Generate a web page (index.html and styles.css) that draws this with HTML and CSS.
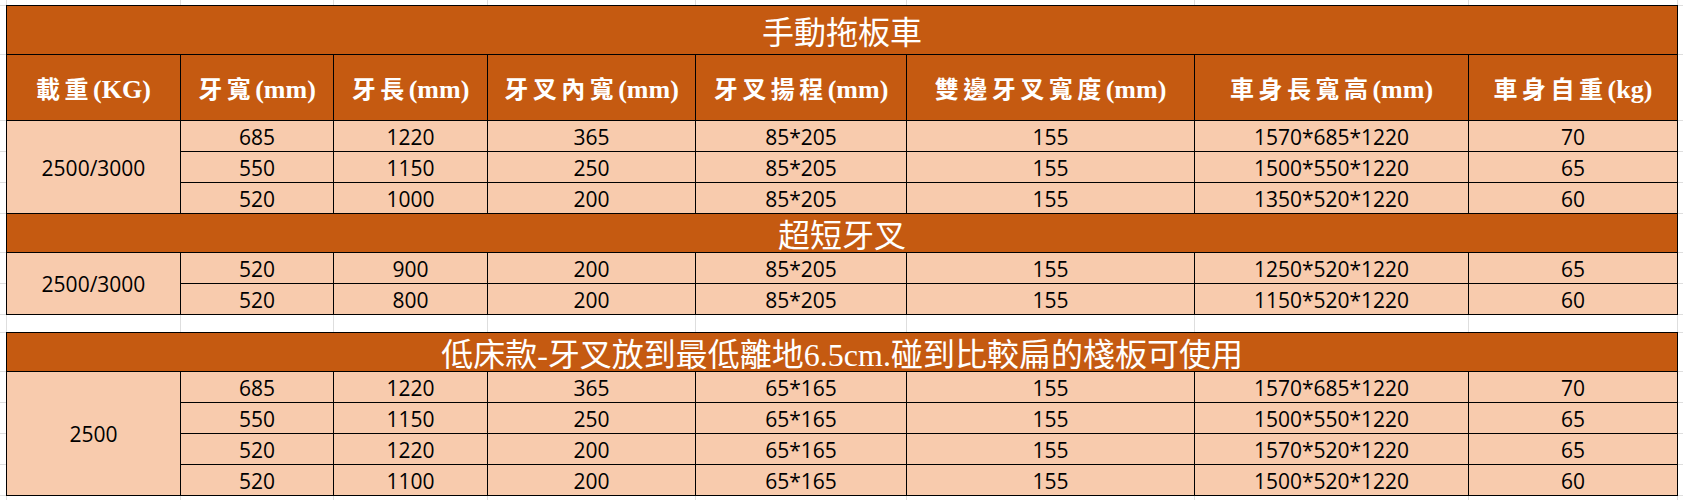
FILE: index.html
```html
<!DOCTYPE html>
<html lang="zh-Hant">
<head>
<meta charset="utf-8">
<title>手動拖板車</title>
<link rel="stylesheet" href="styles.css">
</head>
<body>
<div class="sheet">
<table class="spec">
  <colgroup>
    <col class="c1"><col class="c2"><col class="c3"><col class="c4"><col class="c5"><col class="c6"><col class="c7"><col class="c8">
  </colgroup>
  <tr class="title-row"><td colspan="8" class="title">手動拖板車</td></tr>
  <tr class="head-row">
    <td class="head">載重<span class="unit">(KG)</span></td>
    <td class="head">牙寬<span class="unit">(mm)</span></td>
    <td class="head">牙長<span class="unit">(mm)</span></td>
    <td class="head">牙叉內寬<span class="unit">(mm)</span></td>
    <td class="head">牙叉揚程<span class="unit">(mm)</span></td>
    <td class="head">雙邊牙叉寬度<span class="unit">(mm)</span></td>
    <td class="head">車身長寬高<span class="unit">(mm)</span></td>
    <td class="head">車身自重<span class="unit">(kg)</span></td>
  </tr>
  <tr class="row"><td rowspan="3">2500/3000</td><td>685</td><td>1220</td><td>365</td><td>85*205</td><td>155</td><td>1570*685*1220</td><td>70</td></tr>
  <tr class="row"><td>550</td><td>1150</td><td>250</td><td>85*205</td><td>155</td><td>1500*550*1220</td><td>65</td></tr>
  <tr class="row"><td>520</td><td>1000</td><td>200</td><td>85*205</td><td>155</td><td>1350*520*1220</td><td>60</td></tr>
  <tr class="section-row"><td colspan="8" class="title">超短牙叉</td></tr>
  <tr class="row"><td rowspan="2">2500/3000</td><td>520</td><td>900</td><td>200</td><td>85*205</td><td>155</td><td>1250*520*1220</td><td>65</td></tr>
  <tr class="row"><td>520</td><td>800</td><td>200</td><td>85*205</td><td>155</td><td>1150*520*1220</td><td>60</td></tr>
</table>

<table class="spec second">
  <colgroup>
    <col class="c1"><col class="c2"><col class="c3"><col class="c4"><col class="c5"><col class="c6"><col class="c7"><col class="c8">
  </colgroup>
  <tr class="section-row"><td colspan="8" class="title">低床款-牙叉放到最低離地6.5cm.碰到比較扁的棧板可使用</td></tr>
  <tr class="row"><td rowspan="4">2500</td><td>685</td><td>1220</td><td>365</td><td>65*165</td><td>155</td><td>1570*685*1220</td><td>70</td></tr>
  <tr class="row"><td>550</td><td>1150</td><td>250</td><td>65*165</td><td>155</td><td>1500*550*1220</td><td>65</td></tr>
  <tr class="row"><td>520</td><td>1220</td><td>200</td><td>65*165</td><td>155</td><td>1570*520*1220</td><td>65</td></tr>
  <tr class="row"><td>520</td><td>1100</td><td>200</td><td>65*165</td><td>155</td><td>1500*520*1220</td><td>60</td></tr>
</table>
</div>
</body>
</html>
```

FILE: styles.css
```css
html, body {
  margin: 0;
  padding: 0;
}

body {
  width: 1683px;
  height: 500px;
  overflow: hidden;
  background-color: #ffffff;
  background-image:
    linear-gradient(#dedede, #dedede),
    linear-gradient(#dedede, #dedede),
    linear-gradient(#dedede, #dedede),
    linear-gradient(#dedede, #dedede),
    linear-gradient(#dedede, #dedede),
    linear-gradient(#dedede, #dedede),
    linear-gradient(#dedede, #dedede),
    linear-gradient(#dedede, #dedede),
    linear-gradient(#dedede, #dedede),
    linear-gradient(#dedede, #dedede),
    linear-gradient(#dedede, #dedede),
    linear-gradient(#dedede, #dedede),
    linear-gradient(#dedede, #dedede),
    linear-gradient(#dedede, #dedede),
    linear-gradient(#dedede, #dedede),
    linear-gradient(#dedede, #dedede),
    linear-gradient(#dedede, #dedede),
    linear-gradient(#dedede, #dedede),
    linear-gradient(#dedede, #dedede),
    linear-gradient(#dedede, #dedede),
    linear-gradient(#dedede, #dedede),
    linear-gradient(#dedede, #dedede),
    linear-gradient(#dedede, #dedede),
    linear-gradient(#dedede, #dedede);
  background-repeat: no-repeat;
  background-size:
    1px 100%, 1px 100%, 1px 100%, 1px 100%, 1px 100%, 1px 100%, 1px 100%, 1px 100%, 1px 100%,
    100% 1px, 100% 1px, 100% 1px, 100% 1px, 100% 1px, 100% 1px, 100% 1px, 100% 1px,
    100% 1px, 100% 1px, 100% 1px, 100% 1px, 100% 1px, 100% 1px, 100% 1px;
  background-position:
    6px 0, 180px 0, 333px 0, 487px 0, 695px 0, 906px 0, 1194px 0, 1468px 0, 1677px 0,
    0 5px, 0 54px, 0 120px, 0 151px, 0 182px, 0 213px, 0 252px, 0 283px,
    0 314px, 0 332px, 0 371px, 0 402px, 0 433px, 0 464px, 0 495px;
}

.sheet {
  padding: 5px 0 0 6px;
}

.spec {
  border-collapse: separate;
  border-spacing: 0;
  border-top: 1px solid #000000;
  border-left: 1px solid #000000;
  table-layout: fixed;
  width: 1672px;
  font-family: "Open Sans", "Noto Sans CJK TC", sans-serif;
  font-size: 21px;
  color: #000000;
}

.spec.second {
  margin-top: 17px;
}

.c1 { width: 174px; }
.c2 { width: 153px; }
.c3 { width: 154px; }
.c4 { width: 208px; }
.c5 { width: 211px; }
.c6 { width: 288px; }
.c7 { width: 274px; }
.c8 { width: 209px; }

.spec td {
  box-sizing: border-box;
  border-right: 1px solid #000000;
  border-bottom: 1px solid #000000;
  padding: 0;
  text-align: center;
  vertical-align: middle;
  background-color: #f8cbad;
  line-height: 1;
  white-space: nowrap;
}

.row td {
  height: 31px;
  padding-top: 2px;
}

.title-row td {
  height: 49px;
  padding-top: 6px;
}

.section-row td {
  height: 39px;
  padding-top: 5px;
}

.head-row td {
  height: 66px;
  padding-top: 5px;
}

.spec td.title {
  background-color: #c55a11;
  color: #ffffff;
  font-family: "Liberation Serif", "Noto Sans CJK TC", "Noto Sans CJK SC", serif;
  font-size: 32px;
  font-weight: 400;
}

.spec td.head {
  background-color: #c55a11;
  color: #ffffff;
  font-family: "Liberation Serif", "Noto Sans CJK TC", "Noto Sans CJK SC", serif;
  font-size: 24px;
  font-weight: 700;
  letter-spacing: 4.5px;
}

.unit {
  font-size: 26px;
  letter-spacing: 0;
}
```
